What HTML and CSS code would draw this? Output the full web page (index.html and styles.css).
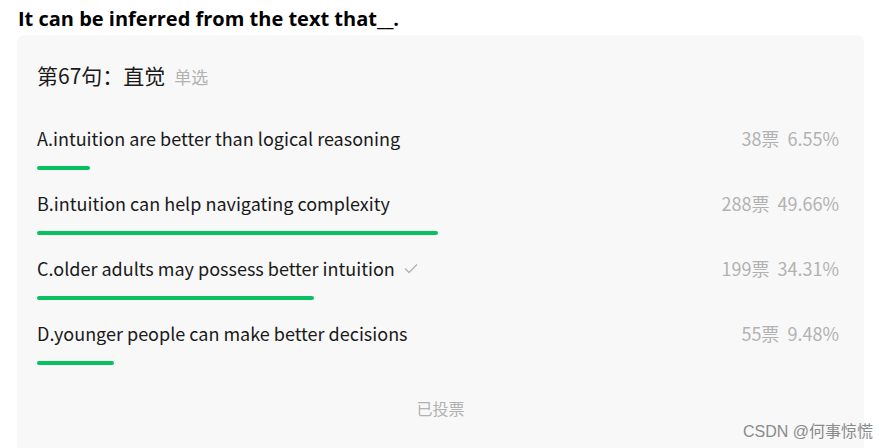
FILE: index.html
```html
<!DOCTYPE html>
<html lang="zh">
<head>
<meta charset="utf-8">
<link rel="stylesheet" href="styles.css">
</head>
<body>
<h1 class="question">It can be inferred from the text that__.</h1>
<section class="card">
  <div class="card-head">
    <span class="card-title">第67句：直觉</span>
    <span class="card-type">单选</span>
  </div>
  <ul class="options">
    <li class="option">
      <div class="option-row">
        <span class="option-text">A.intuition are better than logical reasoning</span>
        <span class="option-stat">38票&nbsp;&nbsp;6.55%</span>
      </div>
      <div class="track"><div class="bar" style="width:6.55%"></div></div>
    </li>
    <li class="option">
      <div class="option-row">
        <span class="option-text">B.intuition can help navigating complexity</span>
        <span class="option-stat">288票&nbsp;&nbsp;49.66%</span>
      </div>
      <div class="track"><div class="bar" style="width:49.66%"></div></div>
    </li>
    <li class="option">
      <div class="option-row">
        <span class="option-text">C.older adults may possess better intuition
          <svg class="check" viewBox="0 0 16 16" width="16" height="16"><path d="M2 8.5 L6 12.5 L14 4.5" fill="none" stroke="#b2b2b2" stroke-width="1.3"/></svg>
        </span>
        <span class="option-stat">199票&nbsp;&nbsp;34.31%</span>
      </div>
      <div class="track"><div class="bar" style="width:34.31%"></div></div>
    </li>
    <li class="option">
      <div class="option-row">
        <span class="option-text">D.younger people can make better decisions</span>
        <span class="option-stat">55票&nbsp;&nbsp;9.48%</span>
      </div>
      <div class="track"><div class="bar" style="width:9.48%"></div></div>
    </li>
  </ul>
  <div class="voted">已投票</div>
</section>
<div class="watermark">CSDN @何事惊慌</div>
</body>
</html>
```
FILE: styles.css
```css
html, body {
  margin: 0;
  padding: 0;
  background: #ffffff;
  overflow: hidden;
}
body {
  width: 889px;
  height: 448px;
  position: relative;
  font-family: "Noto Sans CJK SC", "Noto Sans", sans-serif;
  color: #1a1a1a;
}
.question {
  margin: 0;
  padding: 5px 0 0 18px;
  height: 30px;
  font-family: "Open Sans", "Noto Sans CJK SC", sans-serif;
  font-weight: 700;
  font-size: 20px;
  line-height: 28px;
  color: #000;
}
.card {
  margin: 0 0 0 17px;
  width: 847px;
  height: 430px;
  background: #f8f8f8;
  border-radius: 8px;
  padding: 0 20px;
  box-sizing: border-box;
}
.card-head {
  display: flex;
  align-items: baseline;
  gap: 9px;
  padding-top: 25px;
  height: 78px;
  box-sizing: border-box;
}
.card-title {
  font-size: 21px;
  line-height: 30px;
  color: #1a1a1a;
}
.card-type {
  font-size: 17px;
  color: #b2b2b2;
}
.options {
  list-style: none;
  margin: 0;
  padding: 0;
}
.option {
  height: 65px;
  padding-top: 12px;
  box-sizing: border-box;
}
.option-row {
  display: flex;
  justify-content: space-between;
  align-items: center;
  height: 26px;
  padding-right: 5px;
}
.option-text {
  font-size: 18px;
  line-height: 26px;
  display: flex;
  align-items: center;
  gap: 8px;
}
.option-stat {
  font-size: 18px;
  color: #b2b2b2;
}
.track {
  margin-top: 15px;
  height: 4px;
  width: 808px;
}
.bar {
  height: 4px;
  background: #07c160;
  border-radius: 2px;
}
.voted {
  margin-top: 23px;
  text-align: center;
  font-size: 16px;
  color: #b2b2b2;
}
.watermark {
  position: absolute;
  right: 16px;
  top: 418px;
  font-family: "Liberation Sans", "Noto Sans CJK SC", sans-serif;
  font-size: 16px;
  color: #8a8a8a;
}
```
